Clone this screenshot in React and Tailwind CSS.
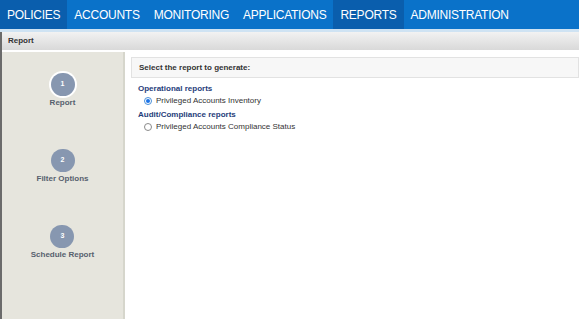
const NAV = [
  { label: "POLICIES", active: true },
  { label: "ACCOUNTS" },
  { label: "MONITORING" },
  { label: "APPLICATIONS" },
  { label: "REPORTS", active: true },
  { label: "ADMINISTRATION" },
];

const STEPS = [
  { n: 1, label: "Report", current: true },
  { n: 2, label: "Filter Options" },
  { n: 3, label: "Schedule Report" },
];

export default function App() {
  return (
    <div className="flex h-[319px] w-[579px] flex-col overflow-hidden bg-white font-['Liberation_Sans',Arial,sans-serif]">
      <nav className="flex h-[29px] shrink-0 items-stretch bg-[#0a72c9] text-[12px] tracking-[-0.25px] text-white">
        {NAV.map((n) => (
          <div
            key={n.label}
            className={`flex items-center px-[7px] ${n.active ? "bg-[#0a5ead]" : ""}`}
          >
            {n.label}
          </div>
        ))}
      </nav>
      <div className="h-[3px] shrink-0 bg-[#cfe3f3]" />
      <div className="flex h-[18px] shrink-0 items-center border-l-2 border-[#6b6b6b] bg-gradient-to-b from-[#f2f2f2] to-[#d9d9d9] pl-[6px] text-[8px] font-bold text-[#333]">
        Report
      </div>
      <div className="h-[2px] shrink-0 border-l-2 border-[#6b6b6b] bg-white" />
      <div className="flex flex-1 border-l-2 border-[#6b6b6b]">
        <aside className="flex w-[123px] shrink-0 flex-col items-center border-r-2 border-[#d6d6cc] bg-[#e6e5dd] pt-[21px]">
          {STEPS.map((s) => (
            <div key={s.n} className="mb-[41px] flex h-[35px] flex-col items-center">
              <div
                className={`flex h-[24px] w-[24px] items-center justify-center rounded-full bg-[#8797b0] text-[7px] font-bold text-white ${
                  s.current ? "ring-2 ring-white" : ""
                }`}
              >
                {s.n}
              </div>
              <div className="mt-[2px] text-[8px] leading-[10px] font-bold text-[#56606e]">{s.label}</div>
            </div>
          ))}
        </aside>
        <main className="flex-1 pl-[6px] pt-[5px]">
          <div className="flex h-[21px] items-center border border-[#e2e2e2] bg-[#f7f7f7] pl-[7px] text-[8px] font-bold text-[#333]">
            Select the report to generate:
          </div>
          <div className="pl-[7px] pt-[5px] text-[8px] leading-[12px]">
            <div className="font-bold text-[#1f3d7a]">Operational reports</div>
            <label className="flex items-center gap-[4px] pl-[6px] text-[#333]">
              <span className="flex h-[8px] w-[8px] items-center justify-center rounded-full border border-[#4a90d9] bg-white">
                <span className="h-[4px] w-[4px] rounded-full bg-[#1a73e8]" />
              </span>
              Privileged Accounts Inventory
            </label>
            <div className="mt-[2px] font-bold text-[#1f3d7a]">Audit/Compliance reports</div>
            <label className="flex items-center gap-[4px] pl-[6px] text-[#333]">
              <span className="h-[8px] w-[8px] rounded-full border border-[#8a8a8a] bg-white" />
              Privileged Accounts Compliance Status
            </label>
          </div>
        </main>
      </div>
    </div>
  );
}
